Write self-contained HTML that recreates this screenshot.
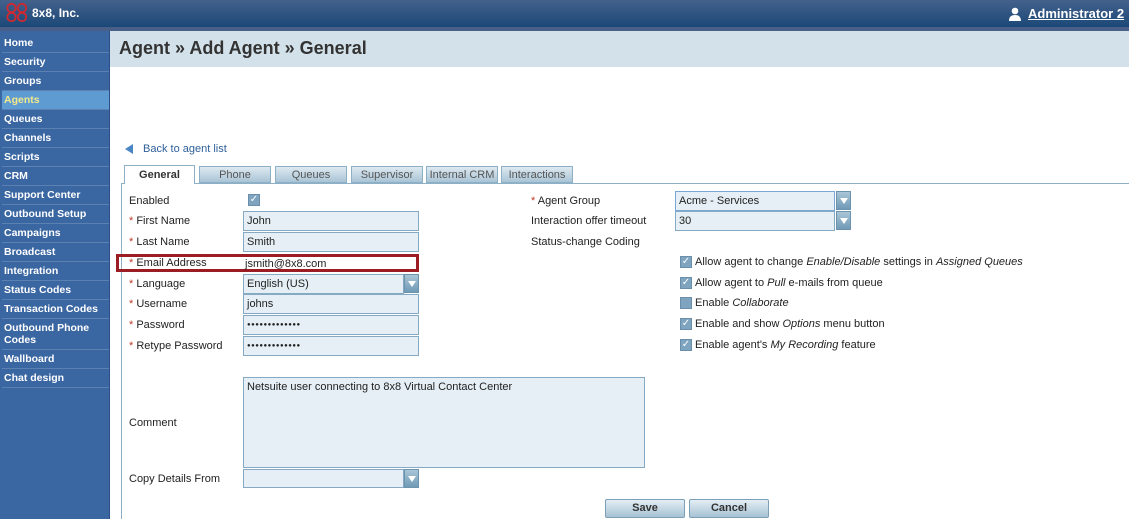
<!DOCTYPE html>
<html><head><style>
*{margin:0;padding:0;box-sizing:border-box}
body{width:1129px;height:519px;overflow:hidden;background:#fff;font-family:"Liberation Sans",Arial,sans-serif;font-size:11px;color:#222;position:relative}
.abs{position:absolute;white-space:nowrap}
#top{left:0;top:0;width:1129px;height:27px;background:linear-gradient(#44618c,#1b4877)}
#stripe{left:0;top:27px;width:1129px;height:4px;background:#4a5f88}
#side{left:0;top:31px;width:110px;height:488px;background:#3a66a2;border-right:1px solid #2c5085}
.nav{position:absolute;left:2px;width:107px;color:#fff;font-weight:bold;font-size:10.5px;padding-left:2px;border-bottom:1px solid #5b80b2;line-height:18px;white-space:normal}
#hdr{left:110px;top:31px;width:1019px;height:36px;background:#d3e2ea}
.in{position:absolute;height:20px;background:#e5eff5;border:1px solid #86a9c4;padding-left:3px;line-height:19px;font-size:11px;white-space:nowrap}
.lbl{position:absolute;font-size:11px;white-space:nowrap}
.req{color:#c0392b}
.tab{position:absolute;top:166px;height:17px;background:linear-gradient(#dde9f0,#a9c4d6);border:1px solid #8eb0c6;color:#555;text-align:center;line-height:16px;font-size:11px}
.dd{position:absolute;width:15px;height:19px;background:linear-gradient(#a9c5d7,#6f9ab6);border:1px solid #6b93ad}
.dd:after{content:"";position:absolute;left:3px;top:6px;border-left:4px solid transparent;border-right:4px solid transparent;border-top:6px solid #fff}
.cb{position:absolute;width:12px;height:12px;background:#7ea4c0;border:1px solid #6b8fab;color:#fff;font-size:10px;line-height:10px;text-align:center}
.btn{position:absolute;top:499px;height:19px;width:80px;background:linear-gradient(#e4eef4,#a7c2d4);border:1px solid #7c9fb8;border-radius:2px;text-align:center;font-weight:bold;font-size:11px;line-height:17px;color:#333}
.pw{font-size:6px;letter-spacing:0.5px;line-height:18px}
</style></head><body>
<div id="top" class="abs"></div>
<div class="abs" style="left:5px;top:2px;width:24px;height:22px">
<svg width="24" height="22" viewBox="0 0 24 22"><g fill="none" stroke="#d2282e" stroke-width="1.8"><circle cx="6.5" cy="6" r="4.2"/><circle cx="6.5" cy="15" r="4.2"/><circle cx="17" cy="6" r="4.2"/><circle cx="17" cy="15" r="4.2"/></g></svg></div>
<div class="abs" style="left:32px;top:6px;color:#fff;font-weight:bold;font-size:12px">8x8, Inc.</div>
<div class="abs" style="left:1008px;top:7px;width:14px;height:14px">
<svg width="14" height="14" viewBox="0 0 14 14"><circle cx="7" cy="4" r="3.3" fill="#fff"/><path d="M1 14 Q1 8 7 8 Q13 8 13 14Z" fill="#fff"/></svg></div>
<div class="abs" style="left:1028px;top:6px;color:#fff;font-weight:bold;font-size:13px;text-decoration:underline">Administrator 2</div>
<div id="stripe" class="abs"></div>
<div id="side" class="abs">
<div class="nav" style="top:3px">Home</div>
<div class="nav" style="top:22px">Security</div>
<div class="nav" style="top:41px">Groups</div>
<div class="nav" style="top:60px;background:#5e9bd2;color:#f3e98a">Agents</div>
<div class="nav" style="top:79px">Queues</div>
<div class="nav" style="top:98px">Channels</div>
<div class="nav" style="top:117px">Scripts</div>
<div class="nav" style="top:136px">CRM</div>
<div class="nav" style="top:155px">Support Center</div>
<div class="nav" style="top:174px">Outbound Setup</div>
<div class="nav" style="top:193px">Campaigns</div>
<div class="nav" style="top:212px">Broadcast</div>
<div class="nav" style="top:231px">Integration</div>
<div class="nav" style="top:250px">Status Codes</div>
<div class="nav" style="top:269px">Transaction Codes</div>
<div class="nav" style="top:288px;height:31px;line-height:12px;padding-top:3px">Outbound Phone<br>Codes</div>
<div class="nav" style="top:319px">Wallboard</div>
<div class="nav" style="top:338px">Chat design</div>
</div>
<div id="hdr" class="abs"></div>
<div class="abs" style="left:119px;top:38px;font-size:18px;font-weight:bold;color:#333">Agent » Add Agent » General</div>
<div class="abs" style="left:125px;top:144px;width:0;height:0;border-top:5px solid transparent;border-bottom:5px solid transparent;border-right:8px solid #4a86c5"></div>
<div class="abs" style="left:143px;top:143px;color:#2e5f9a;font-size:11px">Back to agent list</div>
<div class="abs" style="left:121px;top:183px;width:1008px;height:336px;border-left:1px solid #8eb0c6;border-top:1px solid #8eb0c6"></div>
<div class="abs" style="left:124px;top:165px;width:71px;height:19px;background:#fff;border:1px solid #8eb0c6;border-bottom:none;text-align:center;font-weight:bold;line-height:19px;color:#333">General</div>
<div class="tab" style="left:199px;width:72px">Phone</div>
<div class="tab" style="left:275px;width:72px">Queues</div>
<div class="tab" style="left:351px;width:72px">Supervisor</div>
<div class="tab" style="left:426px;width:72px">Internal CRM</div>
<div class="tab" style="left:501px;width:72px">Interactions</div>

<div class="lbl" style="left:129px;top:195px">Enabled</div>
<div class="cb" style="left:248px;top:194px">✓</div>
<div class="lbl" style="left:129px;top:215px"><span class="req">*</span> First Name</div>
<div class="in" style="left:243px;top:211px;width:176px">John</div>
<div class="lbl" style="left:129px;top:236px"><span class="req">*</span> Last Name</div>
<div class="in" style="left:243px;top:232px;width:176px">Smith</div>
<div class="abs" style="left:116px;top:254px;width:303px;height:18px;border:3px solid #9b1c22"></div>
<div class="lbl" style="left:129px;top:257px"><span class="req">*</span> Email Address</div>
<div class="abs" style="left:245px;top:258px;font-size:11px">jsmith@8x8.com</div>
<div class="lbl" style="left:129px;top:278px"><span class="req">*</span> Language</div>
<div class="in" style="left:243px;top:274px;width:161px">English (US)</div>
<div class="dd" style="left:404px;top:274px"></div>
<div class="lbl" style="left:129px;top:298px"><span class="req">*</span> Username</div>
<div class="in" style="left:243px;top:294px;width:176px">johns</div>
<div class="lbl" style="left:129px;top:319px"><span class="req">*</span> Password</div>
<div class="in pw" style="left:243px;top:315px;width:176px">●●●●●●●●●●●●●</div>
<div class="lbl" style="left:129px;top:340px"><span class="req">*</span> Retype Password</div>
<div class="in pw" style="left:243px;top:336px;width:176px">●●●●●●●●●●●●●</div>

<div class="lbl" style="left:531px;top:195px"><span class="req">*</span> Agent Group</div>
<div class="in" style="left:675px;top:191px;width:160px;border-color:#7aa7d6">Acme - Services</div>
<div class="dd" style="left:836px;top:191px"></div>
<div class="lbl" style="left:531px;top:215px">Interaction offer timeout</div>
<div class="in" style="left:675px;top:211px;width:160px">30</div>
<div class="dd" style="left:836px;top:211px"></div>
<div class="lbl" style="left:531px;top:236px">Status-change Coding</div>
<div class="cb" style="left:680px;top:256px">✓</div><div class="lbl" style="left:695px;top:256px">Allow agent to change <i>Enable/Disable</i> settings in <i>Assigned Queues</i></div>
<div class="cb" style="left:680px;top:277px">✓</div><div class="lbl" style="left:695px;top:277px">Allow agent to <i>Pull</i> e-mails from queue</div>
<div class="cb" style="left:680px;top:297px"></div><div class="lbl" style="left:695px;top:297px">Enable <i>Collaborate</i></div>
<div class="cb" style="left:680px;top:318px">✓</div><div class="lbl" style="left:695px;top:318px">Enable and show <i>Options</i> menu button</div>
<div class="cb" style="left:680px;top:339px">✓</div><div class="lbl" style="left:695px;top:339px">Enable agent's <i>My Recording</i> feature</div>

<div class="lbl" style="left:129px;top:417px">Comment</div>
<div class="in" style="left:243px;top:377px;width:402px;height:91px;line-height:16px;padding-top:1px">Netsuite user connecting to 8x8 Virtual Contact Center</div>
<div class="lbl" style="left:129px;top:473px">Copy Details From</div>
<div class="in" style="left:243px;top:469px;width:161px;height:19px"></div>
<div class="dd" style="left:404px;top:469px"></div>
<div class="btn" style="left:605px">Save</div>
<div class="btn" style="left:689px">Cancel</div>
</body></html>
